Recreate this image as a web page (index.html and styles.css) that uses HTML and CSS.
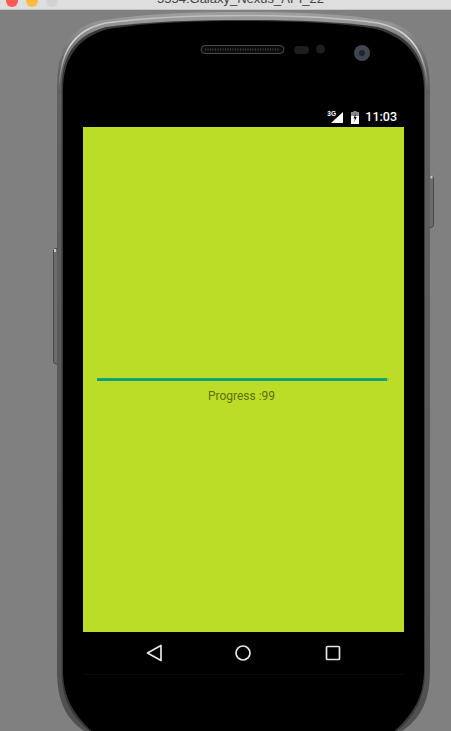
FILE: index.html
```html
<!DOCTYPE html>
<html lang="en">
<head>
<meta charset="utf-8">
<title>5554:Galaxy_Nexus_API_22</title>
<link rel="stylesheet" href="styles.css">
</head>
<body>
<header class="titlebar">
  <span class="light light-red"></span>
  <span class="light light-yellow"></span>
  <span class="light light-gray"></span>
  <span class="title">5554:Galaxy_Nexus_API_22</span>
</header>
<main class="stage">
  <svg class="device-art" width="451" height="721" viewBox="0 10 451 721" aria-hidden="true">
    <defs>
      <linearGradient id="rim" x1="0" y1="0" x2="0" y2="1">
        <stop offset="0" stop-color="#a0a0a0"/>
        <stop offset="0.08" stop-color="#626262"/>
        <stop offset="1" stop-color="#505050"/>
      </linearGradient>
      <linearGradient id="shine" gradientUnits="userSpaceOnUse" x1="0" y1="15" x2="0" y2="95">
        <stop offset="0" stop-color="#bdbdbd"/>
        <stop offset="0.35" stop-color="#e0e0e0"/>
        <stop offset="0.7" stop-color="#8a8a8a"/>
        <stop offset="1" stop-color="#555555"/>
      </linearGradient>
    </defs>
    <path class="btn" d="M53.500,251 Q53.500,248.500 56,248.500 L58,248.500 L58,364 L56,364 Q53.500,364 53.500,361 Z"/>
    <rect class="btn-cap" x="54" y="249" width="2" height="3"/>
    <path class="btn" d="M429,175.500 L431,175.500 Q433.500,176 433.500,179 L433.500,225 Q433.500,227 431,227.500 L429,227.500 Z"/>
    <rect class="btn-cap" x="430.500" y="175.500" width="2" height="3"/>
    <path fill="url(#rim)" d="M57,90 C57,50 68,26 104,20 C150,13 200,12 243,12 C290,12 335,13 380,20 C416,26 430,50 430,90 L430,670 C430,705 418,722 396,735 L90,735 C68,722 57,705 57,670 Z"/>
    <path class="rim-shine" d="M59,94 C59,54 72,30 106,23 C150,17 200,15.500 243,15.500 C290,15.500 335,17 378,23 C412,30 427,54 428,94"/>
    <path class="rim-dark" d="M61.500,90 C61.500,56 74,36 106,27 C150,21 200,20 243,20 C290,20 335,21 378,27 C410,36 425,56 425,90 L425,670 C425,700 414,718 392,735 L94,735 C72,718 61.500,700 61.500,670 Z"/>
    <path fill="#000" d="M63,90 C63,60 76,38 108,29 C150,22 200,21 243,21 C290,21 335,22 376,29 C408,38 424,60 424,90 L424,670 C424,698 412,716 390,735 L96,735 C74,716 63,698 63,670 Z"/>
    <rect class="speaker" x="201" y="45.500" width="83" height="8" rx="4"/>
    <path class="speaker-holes" d="M205,49.500 L280,49.500"/>
    <rect class="sensor" x="294" y="46" width="15" height="8" rx="4"/>
    <circle class="sensor" cx="320.500" cy="49" r="4.500"/>
    <circle class="camera" cx="362" cy="53" r="8"/>
    <circle class="camera-lens" cx="362" cy="53" r="3"/>
  </svg>
  <div class="device">
    <div class="statusbar">
      <span class="net-wrap">
        <svg class="signal" width="16" height="13" viewBox="0 0 16 13"><path fill="#fff" d="M15,1 L15,12 L3,12 Z"/></svg>
        <span class="net">3G</span>
      </span>
      <svg class="battery" width="8" height="13" viewBox="0 0 8 13">
        <path fill="#8a8a8a" d="M2.500,0 L5.500,0 L5.500,1 L8,1 L8,5 L0,5 L0,1 L2.500,1 Z"/>
        <rect fill="#fff" x="0" y="5" width="8" height="8"/>
        <path fill="#000" d="M4.800,2 L2.500,7.500 L4,7.500 L3.200,11 L5.800,6 L4.300,6 Z"/>
      </svg>
      <span class="clock">11:03</span>
    </div>
    <section class="screen">
      <div class="track"><div class="fill" style="width:99.300%"></div></div>
      <p class="label">Progress :99</p>
    </section>
    <nav class="navbar">
      <svg class="nav-icon" width="16" height="18" viewBox="0 0 16 18"><path d="M15,1.500 L15,16.500 L1.500,9 Z"/></svg>
      <svg class="nav-icon" width="16" height="18" viewBox="0 0 16 18"><circle cx="8" cy="9" r="7"/></svg>
      <svg class="nav-icon" width="16" height="18" viewBox="0 0 16 18"><rect x="1.500" y="2.500" width="13" height="13" rx="1"/></svg>
    </nav>
  </div>
</main>
</body>
</html>
```

FILE: styles.css
```css
html, body {
  margin: 0;
  padding: 0;
}

body {
  width: 451px;
  height: 731px;
  overflow: hidden;
  background: #808080;
  font-family: Roboto, "Liberation Sans", sans-serif;
}

.titlebar {
  position: relative;
  height: 10px;
  overflow: hidden;
  background: #dedede;
  border-bottom: 1px solid #c4c4c4;
  box-sizing: border-box;
  display: flex;
  gap: 8px;
  padding-left: 6px;
}

.light {
  flex: none;
  width: 12px;
  height: 12px;
  margin-top: -5px;
  border-radius: 50%;
}

.light-red { background: #fc5a55; }
.light-yellow { background: #fdbb41; }
.light-gray { background: #d2d2d2; }

.title {
  position: absolute;
  left: 157px;
  top: -9px;
  font-family: "Liberation Sans", sans-serif;
  font-size: 13px;
  line-height: 16px;
  color: #444444;
  white-space: nowrap;
}

.stage {
  position: relative;
  height: 721px;
  padding: 97px 0 0 83px;
  box-sizing: border-box;
}

.device-art {
  position: absolute;
  left: 0;
  top: 0;
}

.btn { fill: #6c6c6c; stroke: #484848; stroke-width: 1; }
.btn-cap { fill: #c8c8c8; }
.rim-shine { fill: none; stroke: url(#shine); stroke-width: 1.500; }
.rim-dark { fill: #383838; }
.speaker { fill: #0c0c0c; stroke: #4c4c4c; stroke-width: 1; }
.speaker-holes { stroke: #444444; stroke-width: 2; stroke-dasharray: 1 1.500; fill: none; }
.sensor { fill: #1e1e1e; }
.camera { fill: #3f4652; }
.camera-lens { fill: #22262c; }

.device {
  position: relative;
  width: 321px;
}

.statusbar {
  height: 20px;
  display: flex;
  align-items: center;
  justify-content: flex-end;
  padding-right: 7px;
  color: #fff;
}

.net-wrap {
  position: relative;
  display: block;
  width: 16px;
  height: 13px;
  margin-right: 7px;
}

.signal { display: block; }

.net {
  position: absolute;
  left: -1px;
  top: -1px;
  font-family: "Liberation Sans", sans-serif;
  font-size: 6.500px;
  font-weight: 700;
  line-height: 7px;
  color: #fff;
}

.battery {
  display: block;
  margin-right: 6px;
}

.clock {
  font-size: 12.500px;
  font-weight: 500;
  line-height: 20px;
}

.screen {
  height: 505px;
  box-sizing: border-box;
  padding: 251px 15px 0 14px;
  background: #bbdd25;
}

.track {
  height: 3px;
  background: #a9c920;
}

.fill {
  height: 3px;
  box-sizing: border-box;
  background: #069e84;
  border-top: 1px solid #16ab7a;
}

.label {
  margin: 7px 0 0;
  padding-right: 3px;
  text-align: center;
  font-size: 12px;
  line-height: 16px;
  color: #5f7010;
}

.navbar {
  height: 43px;
  box-sizing: border-box;
  display: flex;
  align-items: center;
  justify-content: center;
  gap: 73.500px;
  padding-right: 1px;
  border-bottom: 1px solid #0b0b0b;
}

.nav-icon {
  display: block;
  fill: none;
  stroke: #e4e4e4;
  stroke-width: 1.700;
  stroke-linejoin: round;
}
```
